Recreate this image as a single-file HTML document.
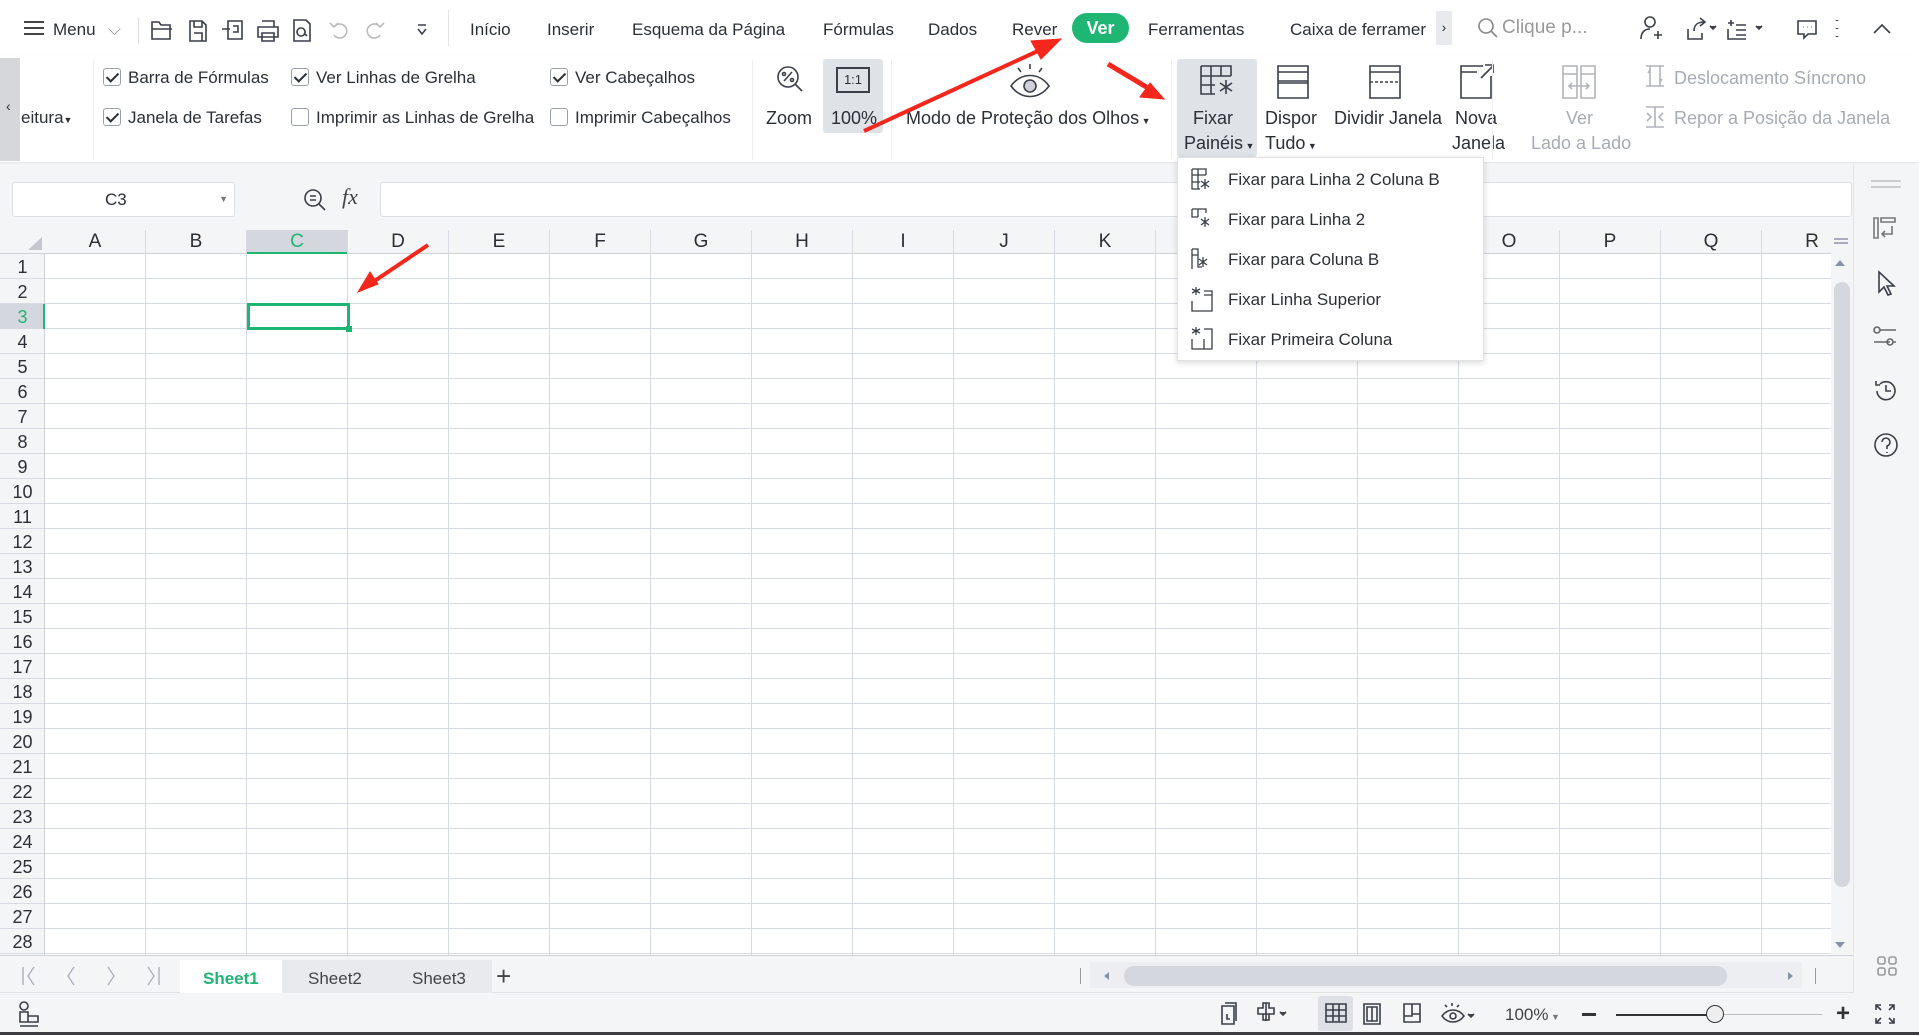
<!DOCTYPE html>
<html><head><meta charset="utf-8"><style>
*{margin:0;padding:0;box-sizing:border-box}
body{width:1919px;height:1035px;overflow:hidden;background:#fff;font-family:"Liberation Sans","DejaVu Sans",sans-serif;color:#2b2f36;position:relative}
.a{position:absolute;white-space:nowrap}
.t{font-size:17px;top:20px}
.r{font-size:17px}
.dis{color:#a7abb3}
.cb{position:absolute;width:18px;height:18px;border:1px solid #9aa0aa;border-radius:3px;background:#fff}
.cb.on::after{content:"";position:absolute;left:5px;top:1px;width:5px;height:10px;border:solid #2b2f36;border-width:0 2px 2px 0;transform:rotate(45deg)}
.ch{position:absolute;top:230px;height:24px;width:101px;text-align:center;font-size:19px;line-height:24px;border-right:1px solid #d6dae2}
.rh{position:absolute;left:0;width:45px;height:25px;text-align:center;font-size:18px;line-height:25px}
.mi{position:absolute;left:1228px;font-size:17px}
.ic{position:absolute;stroke:#3a3f48;fill:none;stroke-width:1.6}
</style></head><body>
<div class="a" style="left:0;top:0;width:1919px;height:56px;background:#fff"></div>
<div class="a" style="left:24px;top:21px;width:20px;height:2px;background:#444;box-shadow:0 6px 0 #444,0 12px 0 #444"></div>
<div class="a t" style="left:53px">Menu</div>
<div class="a t" style="left:108px;color:#888">⌵</div>
<div class="a" style="left:138px;top:18px;width:1px;height:26px;background:#ddd"></div>
<svg class="ic" style="left:150px;top:17px" width="290" height="26" viewBox="0 0 290 26">
<path d="M2 5h7l2 3h9v14H2z M2 12h20"/>
<path d="M40 4h12l4 4v16H40z M44 4v6h8V4 M44 16h8v8"/>
<path d="M78 4h14v18H78z M72 12h8 M83 9h5v6h-5"/>
<path d="M112 4h12v6 M108 10h20v10h-20z M112 16h12v8h-12z"/>
<path d="M144 3h12l4 4v17h-16z M151 11a4 4 0 1 0 .1 0 M154 16l3 3"/>
<path d="M184 10a7 7 0 1 1 0 8 M180 6l4 4 4-4" stroke="#bbb"/>
<path d="M230 10a7 7 0 1 0 0 8 M234 6l-4 4-4-4" stroke="#bbb"/>
<path d="M268 8h8 M268 12l4 5 4-5"/>
</svg>
<div class="a" style="left:448px;top:10px;width:1px;height:36px;background:#e3e3e3"></div>
<div class="a t" style="left:470px">Início</div>
<div class="a t" style="left:547px">Inserir</div>
<div class="a t" style="left:632px">Esquema da Página</div>
<div class="a t" style="left:823px">Fórmulas</div>
<div class="a t" style="left:928px">Dados</div>
<div class="a t" style="left:1012px">Rever</div>
<div class="a" style="left:1072px;top:13px;width:57px;height:30px;border-radius:15px;background:#1fb573;color:#fff;font-size:18px;font-weight:bold;text-align:center;line-height:30px">Ver</div>
<div class="a t" style="left:1148px">Ferramentas</div>
<div class="a t" style="left:1290px">Caixa de ferramer</div>
<div class="a" style="left:1436px;top:11px;width:16px;height:34px;background:#e8eaee;font-size:14px;line-height:32px;text-align:center">›</div>
<svg class="ic" style="left:1477px;top:17px;stroke:#888" width="24" height="24"><circle cx="9" cy="9" r="7"/><path d="M14 14l6 6"/></svg>
<div class="a t" style="left:1502px;color:#999;font-size:19px;top:17px">Clique p...</div>
<svg class="ic" style="left:1638px;top:15px" width="260" height="28" viewBox="0 0 260 28">
<circle cx="12" cy="7" r="5"/><path d="M3 24c0-7 4-10 9-10 M16 20h8 M20 16v8"/>
<path d="M50 14v10h14v-6 M56 16c0-6 4-9 10-9 M62 3l5 4-5 4"/><path d="M72 11l3 3 3-3" fill="#444"/>
<path d="M90 8h6 M93 5v6 M98 10h10 M98 15h10 M98 20h10 M90 14v10h18"/><path d="M118 11l3 3 3-3" fill="#444"/>
<path d="M160 6h18v13h-8l-4 4v-4h-6z M165 12h.5 M169 12h.5 M173 12h.5"/>
<path d="M199 5v1 M199 13v1 M199 21v1" stroke-width="2.5"/>
<path d="M236 18l8-8 8 8"/>
</svg>
<div class="a" style="left:0;top:56px;width:1919px;height:107px;background:#fff;box-shadow:0 2px 4px rgba(0,0,0,.08);border-bottom:1px solid #e6e8ec"></div>
<div class="a" style="left:0;top:58px;width:20px;height:103px;background:#d5d7db;font-size:14px;padding:40px 0 0 6px">‹</div>
<div class="a r" style="left:21px;top:108px">eitura<span style="font-size:9px">▼</span></div>
<div class="a" style="left:93px;top:60px;width:1px;height:100px;background:#eee"></div>
<div class="cb on" style="left:103px;top:68px"></div><div class="a r" style="left:128px;top:68px">Barra de Fórmulas</div>
<div class="cb on" style="left:291px;top:68px"></div><div class="a r" style="left:316px;top:68px">Ver Linhas de Grelha</div>
<div class="cb on" style="left:550px;top:68px"></div><div class="a r" style="left:575px;top:68px">Ver Cabeçalhos</div>
<div class="cb on" style="left:103px;top:108px"></div><div class="a r" style="left:128px;top:108px">Janela de Tarefas</div>
<div class="cb" style="left:291px;top:108px"></div><div class="a r" style="left:316px;top:108px">Imprimir as Linhas de Grelha</div>
<div class="cb" style="left:550px;top:108px"></div><div class="a r" style="left:575px;top:108px">Imprimir Cabeçalhos</div>
<div class="a" style="left:752px;top:60px;width:1px;height:100px;background:#eee"></div>
<svg class="ic" style="left:774px;top:64px" width="34" height="34"><circle cx="14" cy="13" r="10"/><path d="M21 20l7 7 M10 17l8-9"/><circle cx="10" cy="10" r="1.5"/><circle cx="18" cy="16" r="1.5"/></svg>
<div class="a r" style="left:766px;top:108px;font-size:18px">Zoom</div>
<div class="a" style="left:823px;top:59px;width:60px;height:74px;background:#dfe2e7;border-radius:3px"></div>
<div class="a" style="left:836px;top:67px;width:34px;height:26px;border:2px solid #3a3f48;font-size:13px;text-align:center;line-height:22px">1:1</div>
<div class="a r" style="left:831px;top:108px;font-size:18px">100%</div>
<div class="a" style="left:891px;top:60px;width:1px;height:100px;background:#eee"></div>
<svg class="ic" style="left:1008px;top:62px" width="44" height="38"><path d="M22 2v5 M10 6l3 4 M34 6l-3 4 M3 24c10-14 28-14 38 0c-10 14-28 14-38 0z"/><circle cx="22" cy="24" r="6" fill="#cfd2d6"/></svg>
<div class="a r" style="left:906px;top:108px;font-size:18px">Modo de Proteção dos Olhos<span style="font-size:9px"> ▼</span></div>
<div class="a" style="left:1171px;top:60px;width:1px;height:100px;background:#eee"></div>
<div class="a" style="left:1177px;top:59px;width:80px;height:98px;background:#dfe2e7;border-radius:3px"></div>
<svg class="ic" style="left:1199px;top:64px" width="38" height="36"><path d="M2 2h30v10 M2 2v28h14 M2 12h30 M2 21h14 M12 2v28 M22 2v10 M27 16v14 M21 19l12 8 M33 19l-12 8"/></svg>
<div class="a r" style="left:1193px;top:108px;font-size:18px">Fixar</div>
<div class="a r" style="left:1184px;top:133px;font-size:18px">Painéis<span style="font-size:9px"> ▼</span></div>
<svg class="ic" style="left:1276px;top:64px" width="34" height="36"><path d="M2 2h30v32H2z M2 8h30 M2 17h30 M2 19h30"/></svg>
<div class="a r" style="left:1265px;top:108px;font-size:18px">Dispor</div>
<div class="a r" style="left:1265px;top:133px;font-size:18px">Tudo<span style="font-size:9px"> ▼</span></div>
<svg class="ic" style="left:1368px;top:64px" width="34" height="36"><path d="M2 2h30v32H2z M2 8h30"/><path d="M2 18h30" stroke-dasharray="3 2"/></svg>
<div class="a r" style="left:1334px;top:108px;font-size:18px">Dividir Janela</div>
<svg class="ic" style="left:1459px;top:62px" width="36" height="38"><path d="M24 4H2v32h30V14 M2 10h16 M22 16l12-12 M26 3h8v8"/></svg>
<div class="a r" style="left:1455px;top:108px;font-size:18px">Nova</div>
<div class="a r" style="left:1452px;top:133px;font-size:18px">Janela</div>
<div class="a" style="left:1492px;top:60px;width:1px;height:100px;background:#eee"></div>
<svg class="ic" style="left:1561px;top:64px;stroke:#b0b4bb" width="36" height="36"><path d="M2 2h14v32H2z M20 2h14v32H20z M2 10h14 M20 10h14 M8 22h20 M11 19l-3 3 3 3 M25 19l3 3-3 3"/></svg>
<div class="a r dis" style="left:1566px;top:108px;font-size:18px">Ver</div>
<div class="a r dis" style="left:1531px;top:133px;font-size:18px">Lado a Lado</div>
<svg class="ic" style="left:1644px;top:64px;stroke:#b0b4bb" width="22" height="24"><path d="M2 2h18 M2 22h18 M6 2v20 M16 2v20 M6 6l-2 3M16 18l2-3"/></svg>
<div class="a r dis" style="left:1674px;top:68px;font-size:18px">Deslocamento Síncrono</div>
<svg class="ic" style="left:1644px;top:105px;stroke:#b0b4bb" width="22" height="24"><path d="M2 2h18 M2 22h18 M11 2v20 M3 8l4 4-4 4 M19 8l-4 4 4 4"/></svg>
<div class="a r dis" style="left:1674px;top:108px;font-size:18px">Repor a Posição da Janela</div>
<div class="a" style="left:0;top:164px;width:1853px;height:66px;background:#f4f5f7"></div>
<div class="a" style="left:12px;top:182px;width:223px;height:35px;background:#fff;border:1px solid #dcdfe4;border-radius:3px;font-size:17px;line-height:33px;padding-left:92px">C3<span style="position:absolute;right:6px;font-size:9px;color:#777">▼</span></div>
<svg class="ic" style="left:302px;top:187px" width="26" height="26"><circle cx="11" cy="11" r="8"/><path d="M17 17l6 6 M8 9h6 M8 13h6"/></svg>
<div class="a" style="left:342px;top:184px;font-size:22px;font-style:italic;font-family:'Liberation Serif',serif;color:#444">fx</div>
<div class="a" style="left:380px;top:182px;width:1472px;height:35px;background:#fff;border:1px solid #dcdfe4;border-radius:3px"></div>
<div class="a" style="left:0;top:230px;width:1831px;height:24px;background:#f4f5f7;border-bottom:1px solid #cdd1d9"></div>
<div class="a" style="left:247px;top:230px;width:101px;height:24px;background:#d4d7dd;border-bottom:2px solid #1fb573"></div>
<div class="a" style="left:28px;top:237px;width:0;height:0;border-left:14px solid transparent;border-bottom:13px solid #c4c7cc"></div>
<div class="a" style="left:45px;top:254px;width:1786px;height:701px;background-color:#fff;background-image:linear-gradient(to right,#d6dae2 1px,transparent 1px),linear-gradient(to bottom,#d6dae2 1px,transparent 1px);background-size:101px 25px;background-position:100px 0,0 24px"></div>
<div class="a" style="left:0;top:254px;width:45px;height:701px;background:#f4f5f7;border-right:1px solid #cdd1d9;background-image:linear-gradient(to bottom,transparent 24px,#d6dae2 24px);background-size:45px 25px"></div>
<div class="a" style="left:0;top:304px;width:45px;height:25px;background:#d4d7dd;border-right:2px solid #1fb573"></div>
<div class="a" style="left:247px;top:303px;width:103px;height:27px;border:3px solid #1fb573"></div>
<div class="a" style="left:346px;top:326px;width:6px;height:6px;background:#1fb573"></div>
<div id="cols"></div>
<script>
var c="ABCDEFGHIJKLMNOPQR",h="";
for(var i=0;i<18;i++){h+='<div class="ch" style="left:'+(45+i*101)+'px;'+(i==2?'color:#1fb573':'')+'">'+c[i]+'</div>';}
for(var r=1;r<=28;r++){h+='<div class="rh" style="top:'+(255+(r-1)*25)+'px;'+(r==3?'color:#1fb573':'')+'">'+r+'</div>';}
document.getElementById('cols').outerHTML=h;
</script>
<div class="a" style="left:1831px;top:230px;width:22px;height:725px;background:#f4f5f7"></div>
<div class="a" style="left:1834px;top:238px;width:14px;height:2px;background:#aab;box-shadow:0 4px 0 #aab"></div>
<div class="a" style="left:1835px;top:260px;border-left:5px solid transparent;border-right:5px solid transparent;border-bottom:6px solid #8a93a6"></div>
<div class="a" style="left:1834px;top:282px;width:16px;height:605px;background:#d4d7dd;border-radius:8px"></div>
<div class="a" style="left:1835px;top:942px;border-left:5px solid transparent;border-right:5px solid transparent;border-top:6px solid #8a93a6"></div>
<div class="a" style="left:1853px;top:164px;width:66px;height:829px;background:#f4f5f7;border-left:1px solid #e3e5e9"></div>
<div class="a" style="left:1871px;top:180px;width:30px;height:2px;background:#ccc;box-shadow:0 6px 0 #ccc"></div>
<svg class="ic" style="left:1872px;top:216px;stroke:#777" width="26" height="26"><path d="M2 2h4v20H2z M9 2h14v4H9z M20 10v8h-10 M13 15l-3 3 3 3"/></svg>
<svg class="ic" style="left:1876px;top:270px" width="22" height="28"><path d="M3 2v20l5-5 4 8 3-1-4-8h7z"/></svg>
<svg class="ic" style="left:1872px;top:325px;stroke:#666" width="28" height="24"><circle cx="5" cy="5" r="3"/><path d="M8 5h16 M2 17h16 M24 17h-3"/><circle cx="18" cy="17" r="3"/></svg>
<svg class="ic" style="left:1873px;top:378px" width="26" height="26"><path d="M4 13a9 9 0 1 0 3-7 M3 3v4h4 M13 7v6h5"/></svg>
<svg class="ic" style="left:1873px;top:432px" width="26" height="26"><circle cx="13" cy="13" r="11"/><path d="M9 10a4 4 0 1 1 5 4v3 M14 20v1"/></svg>
<svg class="ic" style="left:1876px;top:955px;stroke:#999" width="22" height="22"><rect x="2" y="2" width="7" height="7" rx="2"/><rect x="13" y="2" width="7" height="7" rx="2"/><rect x="2" y="13" width="7" height="7" rx="2"/><rect x="13" y="13" width="7" height="7" rx="2"/></svg>
<div class="a" style="left:0;top:955px;width:1853px;height:38px;background:#f4f5f7;border-top:1px solid #cdd1d9;border-bottom:1px solid #e0e2e6"></div>
<svg class="ic" style="left:20px;top:965px;stroke:#aab1bd;stroke-width:1.4" width="140" height="22"><path d="M3 2v18 M14 2l-6 9 6 9 M54 2l-6 9 6 9 M88 2l6 9-6 9 M128 2l6 9-6 9 M139 2v18"/></svg>
<div class="a" style="left:180px;top:960px;width:102px;height:33px;background:#fff"></div>
<div class="a" style="left:282px;top:960px;width:210px;height:33px;background:#e8eaee"></div>
<div class="a" style="left:203px;top:969px;font-size:17px;color:#1fb573;font-weight:bold">Sheet1</div>
<div class="a" style="left:308px;top:969px;font-size:17px;color:#444">Sheet2</div>
<div class="a" style="left:412px;top:969px;font-size:17px;color:#444">Sheet3</div>
<div class="a" style="left:496px;top:961px;font-size:26px;color:#444">+</div>
<div class="a" style="left:1080px;top:968px;width:1px;height:16px;background:#999"></div>
<div class="a" style="left:1090px;top:962px;width:712px;height:26px;background:#eceef1"></div>
<div class="a" style="left:1124px;top:966px;width:603px;height:20px;background:#d4d7dd;border-radius:10px"></div>
<div class="a" style="left:1104px;top:972px;border-top:4px solid transparent;border-bottom:4px solid transparent;border-right:5px solid #8a93a6"></div>
<div class="a" style="left:1788px;top:972px;border-top:4px solid transparent;border-bottom:4px solid transparent;border-left:5px solid #8a93a6"></div>
<div class="a" style="left:1815px;top:968px;width:1px;height:16px;background:#999"></div>
<div class="a" style="left:0;top:993px;width:1919px;height:39px;background:#f4f5f7"></div>
<div class="a" style="left:0;top:1032px;width:1919px;height:3px;background:#3b3d40"></div>
<svg class="ic" style="left:16px;top:1000px" width="28" height="28"><circle cx="8" cy="6" r="4"/><path d="M4 12h8v10H4z M12 16h10v6H12 M4 26h18"/></svg>
<svg class="ic" style="left:1220px;top:1000px" width="80" height="28" viewBox="0 0 80 28">
<path d="M2 6h12v18H2z M5 3h11v18 M7 14v5h3"/>
<path d="M38 8h5v-5h6v5h5v6h-5v6h-6v-6h-5z M38 14h16 M46 3v18"/><path d="M60 12l3 3 3-3" fill="#444"/>
</svg>
<div class="a" style="left:1318px;top:996px;width:35px;height:35px;background:#dde0e5;border-radius:3px"></div>
<svg class="ic" style="left:1324px;top:1000px" width="160" height="28" viewBox="0 0 160 28">
<path d="M2 4h20v18H2z M2 10h20 M2 16h20 M9 4v18 M15 4v18"/>
<path d="M40 4h16v20H40z M43 7h10v14H43z M48 7v14"/>
<path d="M80 4h16v18H80z M88 4v12h-8 M88 14h8"/>
<path d="M128 3v3 M121 5l2 2 M135 5l-2 2 M118 16c6-8 16-8 22 0c-6 8-16 8-22 0z"/><circle cx="129" cy="16" r="3"/><path d="M144 14l3 3 3-3" fill="#444"/>
</svg>
<div class="a" style="left:1505px;top:1005px;font-size:17px;color:#444">100%<span style="font-size:9px;color:#777"> ▼</span></div>
<div class="a" style="left:1582px;top:1013px;width:14px;height:3px;background:#333"></div>
<div class="a" style="left:1616px;top:1014px;width:100px;height:2px;background:#333"></div>
<div class="a" style="left:1716px;top:1014px;width:106px;height:1px;background:#bbb"></div>
<div class="a" style="left:1706px;top:1005px;width:18px;height:18px;border-radius:50%;background:#eee;border:1.5px solid #333"></div>
<div class="a" style="left:1836px;top:1000px;font-size:24px;color:#333;font-weight:bold">+</div>
<svg class="ic" style="left:1874px;top:1003px" width="22" height="22"><path d="M2 7V2h5 M15 2h5v5 M20 15v5h-5 M7 20H2v-5 M2 2l5 5 M20 2l-5 5 M20 20l-5-5 M2 20l5-5"/></svg>
<div class="a" style="left:1177px;top:157px;width:307px;height:204px;background:#fff;border:1px solid #e0e2e6;box-shadow:0 2px 6px rgba(0,0,0,.15)"></div>
<svg class="ic" style="left:1190px;top:167px;stroke-width:1.3" width="26" height="190" viewBox="0 0 26 190">
<path d="M2 2h14v6 M2 2v20h8 M2 8h14 M2 15h8 M8 2v20 M15 12v10 M11 14l8 6 M19 14l-8 6"/>
<path d="M2 42h14v4 M2 42v8h6 M8 42v8 M15 50v10 M11 52l8 6 M19 52l-8 6"/>
<path d="M2 82h6v18h4 M2 82v20 M2 88h6 M13 90v10 M9 92l8 6 M17 92l-8 6"/>
<path d="M6 120v8 M2 122l8 4 M10 122l-8 4 M14 124h8v20H2v-10 M14 128h8"/>
<path d="M6 160v8 M2 162l8 4 M10 162l-8 4 M14 162h8v20H2v-10 M14 172v10"/>
</svg>
<div class="mi" style="top:170px">Fixar para Linha 2 Coluna B</div>
<div class="mi" style="top:210px">Fixar para Linha 2</div>
<div class="mi" style="top:250px">Fixar para Coluna B</div>
<div class="mi" style="top:290px">Fixar Linha Superior</div>
<div class="mi" style="top:330px">Fixar Primeira Coluna</div>
<svg class="a" style="left:0;top:0" width="1919" height="1035">
<g fill="#f5261b" stroke="#f5261b">
<path d="M864 131L1040 50" stroke-width="4"/><path d="M1061 39l-30 2 10 18z" />
<path d="M1108 64l40 24" stroke-width="5"/><path d="M1164 99l-24-2 10-14z"/>
<path d="M428 245l-55 37" stroke-width="4"/><path d="M358 292l12-20 8 12z"/>
</g></svg>
</body></html>
